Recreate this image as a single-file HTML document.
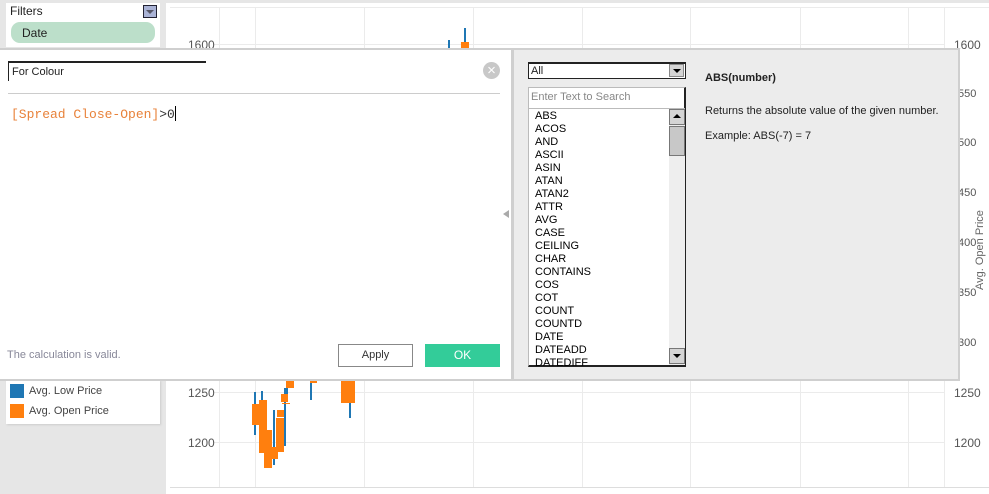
<!DOCTYPE html>
<html><head><meta charset="utf-8"><style>
*{margin:0;padding:0;box-sizing:border-box}
body{width:989px;height:494px;overflow:hidden;background:#fff;font-family:"Liberation Sans",sans-serif;position:relative;font-size:12px;color:#222}
.a{position:absolute}
.gl{position:absolute;background:#ebebeb}
.lbl{position:absolute;font-size:12px;color:#555}
.ls div{height:13px;line-height:13px;font-size:11px;color:#000;padding-left:6px}
</style></head><body>
<div class="a" style="left:0;top:0;width:166px;height:494px;background:#e6e6e6"></div>
<div class="a" style="left:166px;top:0;width:823px;height:3px;background:#e6e6e6"></div>
<div class="a" style="left:6px;top:3px;width:154px;height:44px;background:#fff"></div>
<div class="a" style="left:10px;top:4px;font-size:12px">Filters</div>
<div class="a" style="left:143px;top:5px;width:14px;height:13px;background:#aab3d6;border:1px solid #223"></div>
<div class="a" style="left:146px;top:10px;width:0;height:0;border-left:4px solid transparent;border-right:4px solid transparent;border-top:4px solid #556"></div>
<div class="a" style="left:11px;top:22px;width:144px;height:21px;background:#bcdfca;border-radius:9px;padding:4px 11px;font-size:12px">Date</div>
<div class="gl" style="left:219px;top:7px;width:1px;height:480px"></div>
<div class="gl" style="left:255px;top:7px;width:1px;height:480px"></div>
<div class="gl" style="left:364px;top:7px;width:1px;height:480px"></div>
<div class="gl" style="left:473px;top:7px;width:1px;height:480px"></div>
<div class="gl" style="left:582px;top:7px;width:1px;height:480px"></div>
<div class="gl" style="left:690px;top:7px;width:1px;height:480px"></div>
<div class="gl" style="left:800px;top:7px;width:1px;height:480px"></div>
<div class="gl" style="left:908px;top:7px;width:1px;height:480px"></div>
<div class="gl" style="left:944px;top:7px;width:1px;height:480px"></div>
<div class="gl" style="left:170px;top:7px;width:819px;height:1px"></div>
<div class="gl" style="left:214px;top:44px;width:730px;height:1px"></div>
<div class="gl" style="left:214px;top:392px;width:730px;height:1px"></div>
<div class="gl" style="left:214px;top:442px;width:730px;height:1px"></div>
<div class="gl" style="left:170px;top:487px;width:819px;height:1px;background:#ddd"></div>
<div class="lbl" style="left:188px;top:38px">1600</div>
<div class="lbl" style="left:188px;top:386px">1250</div>
<div class="lbl" style="left:188px;top:436px">1200</div>
<div class="lbl" style="left:954px;top:38px">1600</div>
<div class="lbl" style="left:954px;top:386px">1250</div>
<div class="lbl" style="left:954px;top:436px">1200</div>
<div class="a" style="left:448px;top:40px;width:2px;height:9px;background:#1f77b4"></div>
<div class="a" style="left:464px;top:28px;width:2px;height:15px;background:#1f77b4"></div>
<div class="a" style="left:461px;top:42px;width:8px;height:7px;background:#ff7f0e"></div>
<svg class="a" style="left:240px;top:380px" width="130" height="90">
<g fill="#1f77b4"><rect x="14" y="12" width="2" height="43"/><rect x="21" y="11" width="2" height="51"/><rect x="25" y="25" width="2" height="60"/><rect x="33" y="30" width="2" height="55"/><rect x="44" y="8" width="2" height="58"/><rect x="46" y="0" width="2" height="20"/><rect x="70" y="0" width="2" height="20"/><rect x="109" y="0" width="2" height="38"/></g>
<g fill="#ff7f0e"><rect x="12" y="24" width="9" height="21"/><rect x="19" y="20" width="8" height="9"/><rect x="19" y="28" width="8" height="45"/><rect x="24" y="50" width="8" height="38"/><rect x="30" y="67" width="8" height="12"/><rect x="36" y="38" width="8" height="34"/><rect x="37" y="30" width="7" height="7"/><rect x="41" y="14" width="7" height="8"/><rect x="42" y="23" width="8" height="1"/><rect x="46" y="0" width="8" height="8"/><rect x="70" y="0" width="7" height="3"/><rect x="101" y="0" width="14" height="23"/></g>
</svg>
<div class="a" style="left:6px;top:380px;width:154px;height:44px;background:#fff;box-shadow:1px 1px 2px #ccc"></div>
<div class="a" style="left:10px;top:384px;width:14px;height:14px;background:#1f77b4"></div>
<div class="a" style="left:29px;top:385px;font-size:11px;color:#444">Avg. Low Price</div>
<div class="a" style="left:10px;top:404px;width:14px;height:14px;background:#ff7f0e"></div>
<div class="a" style="left:29px;top:405px;font-size:11px;color:#444">Avg. Open Price</div>
<div class="a" style="left:974px;top:290px;transform:rotate(-90deg);transform-origin:0 0;font-size:11px;color:#666;white-space:nowrap">Avg. Open Price</div>
<div class="lbl" style="left:958px;top:88px;font-size:11px">550</div>
<div class="lbl" style="left:958px;top:137px;font-size:11px">500</div>
<div class="lbl" style="left:958px;top:187px;font-size:11px">450</div>
<div class="lbl" style="left:958px;top:237px;font-size:11px">400</div>
<div class="lbl" style="left:958px;top:287px;font-size:11px">350</div>
<div class="lbl" style="left:958px;top:337px;font-size:11px">300</div>
<div class="a" style="left:0;top:48px;width:960px;height:333px;background:#cfcfcf"></div>
<div class="a" style="left:0;top:50px;width:511px;height:329px;background:#fff"></div>
<div class="a" style="left:514px;top:50px;width:444px;height:329px;background:#ececec"></div>
<div class="a" style="left:8px;top:61px;width:198px;height:20px;border-top:2px solid #222;border-left:1px solid #222;padding:3px 3px;font-size:11px">For Colour</div>
<div class="a" style="left:483px;top:62px;width:17px;height:17px;border-radius:50%;background:#c8c8c8;color:#fff;font-size:15px;line-height:17px;text-align:center">×</div>
<div class="a" style="left:8px;top:93px;width:492px;height:1px;background:#ccc"></div>
<div class="a" style="left:11px;top:106px;font-family:'Liberation Mono',monospace;font-size:13px;color:#e8823a;white-space:nowrap">[Spread Close-Open]<span style="color:#333">&gt;0</span><span style="display:inline-block;width:1px;height:15px;background:#000;vertical-align:-3px"></span></div>
<div class="a" style="left:7px;top:349px;font-size:11px;color:#889">The calculation is valid.</div>
<div class="a" style="left:338px;top:344px;width:75px;height:23px;border:1px solid #888;text-align:center;line-height:21px;font-size:11px;color:#333">Apply</div>
<div class="a" style="left:425px;top:344px;width:75px;height:23px;background:#33cc99;text-align:center;line-height:23px;font-size:12px;color:#fff">OK</div>
<div class="a" style="left:503px;top:210px;width:0;height:0;border-top:4px solid transparent;border-bottom:4px solid transparent;border-right:6px solid #aaa"></div>
<div class="a" style="left:528px;top:62px;width:158px;height:17px;background:#fff;border:1px solid #222;border-top:2px solid #222;font-size:11px;padding:1px 2px">All</div>
<div class="a" style="left:669px;top:64px;width:15px;height:13px;background:#d4d4d4;border:1px solid #888"></div>
<div class="a" style="left:673px;top:69px;border-left:4px solid transparent;border-right:4px solid transparent;border-top:4px solid #000"></div>
<div class="a" style="left:528px;top:87px;width:158px;height:280px;background:#fff;border:1px solid #bbb;border-right:2px solid #222;border-bottom:2px solid #222"></div>
<div class="a" style="left:528px;top:108px;width:157px;height:1px;background:#bbb"></div>
<div class="a" style="left:531px;top:91px;font-size:11px;color:#888">Enter Text to Search</div>
<div class="a" style="left:669px;top:109px;width:16px;height:256px;background:#eee"></div>
<div class="a" style="left:669px;top:109px;width:16px;height:16px;background:#d4d4d4;border:1px solid #777"></div>
<div class="a" style="left:673px;top:114px;border-left:4px solid transparent;border-right:4px solid transparent;border-bottom:4px solid #000"></div>
<div class="a" style="left:669px;top:126px;width:16px;height:30px;background:#c8c8c8;border:1px solid #777"></div>
<div class="a" style="left:669px;top:348px;width:16px;height:16px;background:#d4d4d4;border:1px solid #777"></div>
<div class="a" style="left:673px;top:354px;border-left:4px solid transparent;border-right:4px solid transparent;border-top:4px solid #000"></div>
<div class="a ls" style="left:529px;top:110px;width:139px;height:256px;overflow:hidden">
<div>ABS</div><div>ACOS</div><div>AND</div><div>ASCII</div><div>ASIN</div><div>ATAN</div><div>ATAN2</div><div>ATTR</div><div>AVG</div><div>CASE</div><div>CEILING</div><div>CHAR</div><div>CONTAINS</div><div>COS</div><div>COT</div><div>COUNT</div><div>COUNTD</div><div>DATE</div><div>DATEADD</div><div>DATEDIFF</div></div>
<div class="a" style="left:705px;top:72px;font-size:11px;font-weight:bold">ABS(number)</div>
<div class="a" style="left:705px;top:105px;font-size:11px">Returns the absolute value of the given number.</div>
<div class="a" style="left:705px;top:130px;font-size:11px">Example: ABS(-7) = 7</div>
</body></html>
